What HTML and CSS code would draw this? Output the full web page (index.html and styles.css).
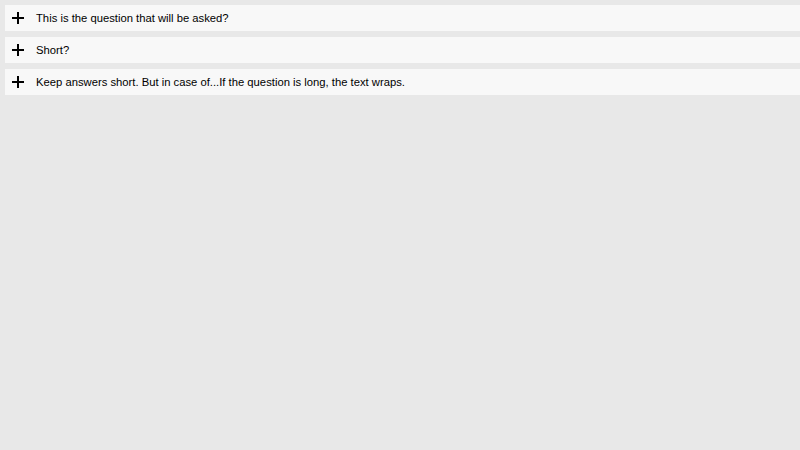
FILE: index.html
```html
<!DOCTYPE html>
<html lang="en">
<head>
    <meta charset="UTF-8">
    <title>FAQ</title>
    <link rel="stylesheet" href="styles.css">
</head>
<body>
    <div class="faq">
        <div class="faq-item">
            <span class="toggle"></span>
            <span class="question">This is the question that will be asked?</span>
        </div>
        <div class="faq-item">
            <span class="toggle"></span>
            <span class="question">Short?</span>
        </div>
        <div class="faq-item">
            <span class="toggle"></span>
            <span class="question">Keep answers short. But in case of...If the question is long, the text wraps.</span>
        </div>
    </div>
</body>
</html>
```

FILE: styles.css
```css
body {
    margin: 0;
    background-color: #e8e8e8;
    font-family: 'Liberation Sans', Arial, sans-serif;
    color: #000;
}

.faq {
    padding: 5px 0 0 5px;
    display: flex;
    flex-direction: column;
    gap: 6px;
}

.faq-item {
    display: flex;
    align-items: center;
    height: 26px;
    background-color: #f8f8f8;
    font-size: 11.25px;
}

.toggle {
    position: relative;
    flex: none;
    width: 12px;
    height: 12px;
    margin: 0 12px 0 7px;
}

.toggle::before,
.toggle::after {
    content: '';
    position: absolute;
    background-color: #000;
}

.toggle::before {
    left: 0;
    top: 5px;
    width: 12px;
    height: 2px;
}

.toggle::after {
    left: 5px;
    top: 0;
    width: 2px;
    height: 12px;
}
```
